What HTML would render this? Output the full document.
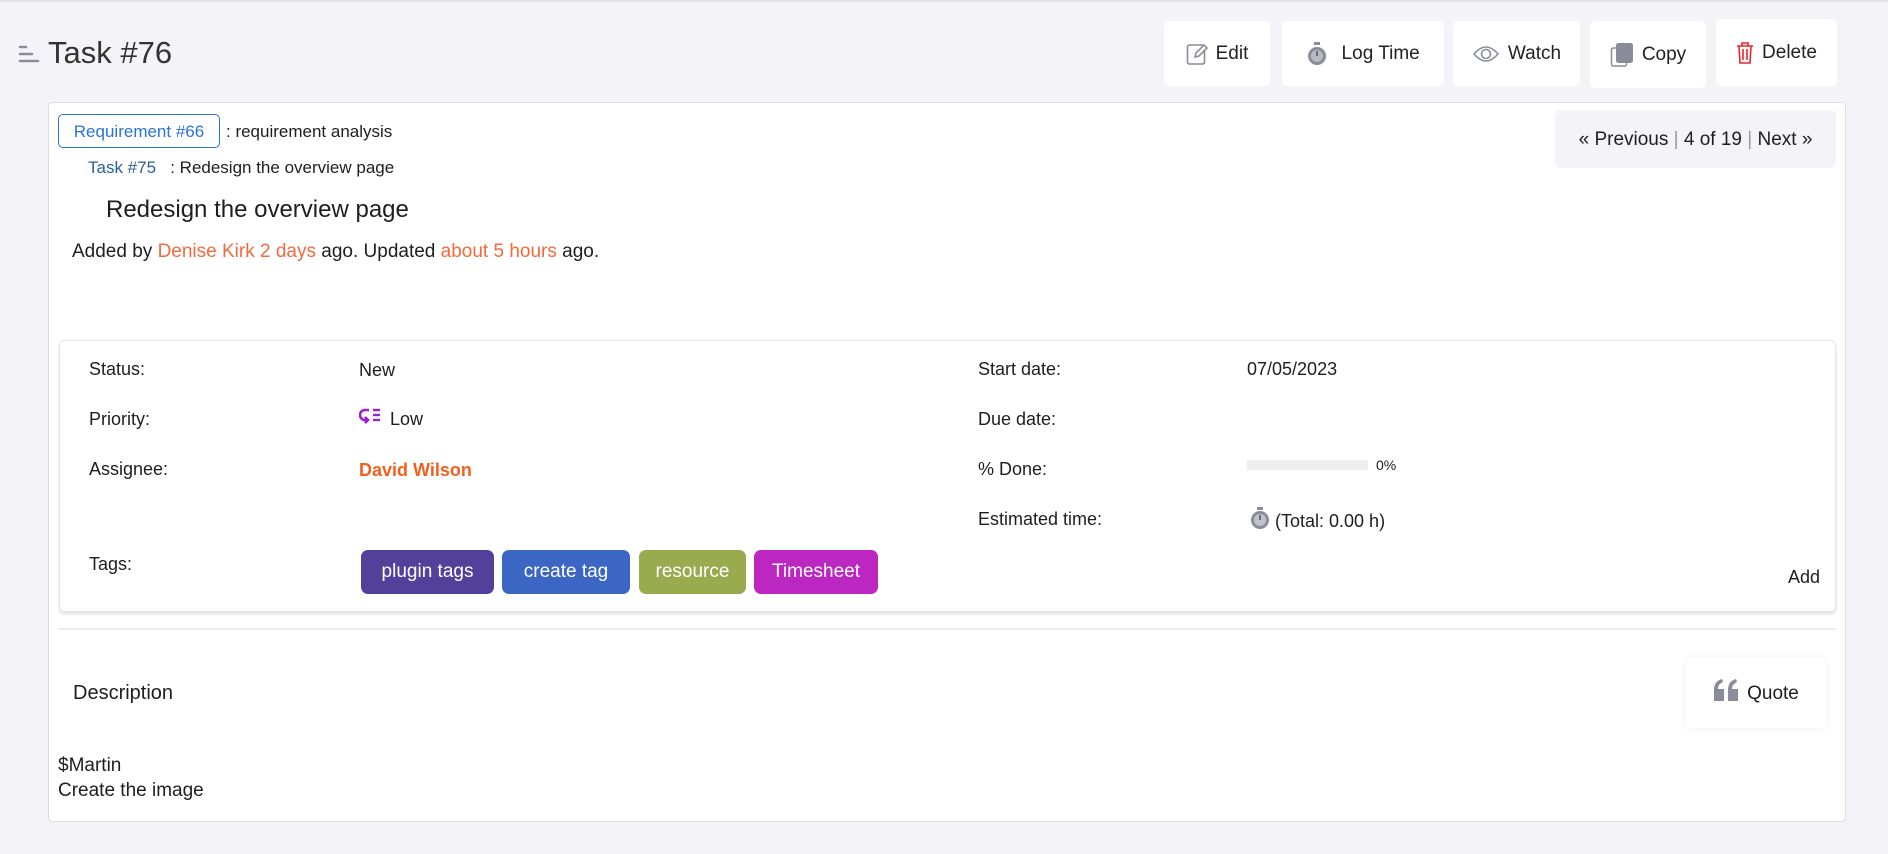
<!DOCTYPE html>
<html><head><meta charset="utf-8"><style>
*{margin:0;padding:0;box-sizing:border-box}
body{width:1888px;height:854px;background:#f4f4f8;font-family:"Liberation Sans",sans-serif;color:#1e1e1e;position:relative;overflow:hidden;border-top:2px solid #e2e2e8}
.a{position:absolute;white-space:nowrap;line-height:1}
.btn{position:absolute;background:#fff;border-radius:5px;display:flex;align-items:center;justify-content:center;font-size:19px;color:#222;gap:8px}
.lbl{font-size:18px}
.tag{position:absolute;top:548px;height:44px;border-radius:7px;color:#fff;font-size:19px;display:flex;align-items:center;justify-content:center}
.or{color:#f26a3d}
</style></head><body>
<svg class="a" style="left:18px;top:42px" width="22" height="20"><g stroke="#8a8c9a" stroke-width="2.5" stroke-linecap="round"><line x1="2" y1="3" x2="8" y2="3"/><line x1="2" y1="10" x2="14" y2="10"/><line x1="2" y1="17" x2="20" y2="17"/></g></svg>
<div class="a" style="left:48px;top:35px;font-size:31px;color:#333">Task #76</div>

<div class="btn" style="left:1164px;top:19px;width:106px;height:65px"><svg width="22" height="24" viewBox="0 0 22 24"><rect x="1.5" y="3" width="17" height="19" rx="2" fill="none" stroke="#8a8c9a" stroke-width="1.6"/><path d="M9 15l1-4 8-8 3 3-8 8z" fill="#fff" stroke="#8a8c9a" stroke-width="1.6"/></svg>Edit</div>
<div class="btn" style="left:1282px;top:19px;width:162px;height:65px"><svg width="22" height="26" viewBox="0 0 22 26"><rect x="8" y="1" width="6" height="3" fill="#8a8c9a"/><circle cx="11" cy="15" r="9" fill="#8a8c9a"/><circle cx="11" cy="15" r="6" fill="#b8bac4"/><line x1="11" y1="10" x2="11" y2="15" stroke="#555" stroke-width="1.5"/></svg>&nbsp;Log Time</div>
<div class="btn" style="left:1453px;top:19px;width:127px;height:65px"><svg width="28" height="20" viewBox="0 0 28 20"><path d="M2 10Q14 -4 26 10Q14 24 2 10z" fill="none" stroke="#8a8c9a" stroke-width="1.6"/><circle cx="14" cy="10" r="4.5" fill="none" stroke="#8a8c9a" stroke-width="1.6"/></svg>Watch</div>
<div class="btn" style="left:1590px;top:19px;width:116px;height:67px"><svg width="24" height="26" viewBox="0 0 24 26"><rect x="1.5" y="6" width="15" height="18" rx="2" fill="#fff" stroke="#8a8c9a" stroke-width="1.5"/><rect x="6" y="1" width="17" height="20" rx="2.5" fill="#8a8c9a"/></svg>Copy</div>
<div class="btn" style="left:1716px;top:17px;width:121px;height:67px"><svg width="18" height="24" viewBox="0 0 18 24"><g fill="none" stroke="#e8232c" stroke-width="1.6"><path d="M1 5h16M6 5V2h6v3M3 5l1 17h10l1-17M7 8v11M11 8v11"/></g></svg>Delete</div>

<div class="a" style="left:48px;top:100px;width:1798px;height:720px;background:#fff;border:1px solid #dcdce2;border-radius:4px"></div>

<div class="a" style="left:58px;top:112px;width:162px;height:34px;border:1px solid #2b73d6;border-radius:5px;color:#2b73d6;font-size:17px;display:flex;align-items:center;justify-content:center">Requirement #66</div>
<div class="a" style="left:226px;top:121px;font-size:17px">: requirement analysis</div>
<div class="a" style="left:88px;top:157px;font-size:17px"><span style="color:#2b5f9a">Task #75</span>&nbsp;&nbsp; : Redesign the overview page</div>
<div class="a" style="left:106px;top:196px;font-size:24px">Redesign the overview page</div>
<div class="a" style="left:72px;top:240px;font-size:19px">Added by <span class="or">Denise Kirk</span> <span class="or">2 days</span> ago. Updated <span class="or">about 5 hours</span> ago.</div>

<div class="a" style="left:1555px;top:108px;width:281px;height:58px;background:#f4f4f8;border-radius:6px;font-size:19px;display:flex;align-items:center;justify-content:center">« Previous <span style="color:#999">&nbsp;|&nbsp;</span> 4 of 19 <span style="color:#999">&nbsp;|&nbsp;</span> Next »</div>

<div class="a" style="left:59px;top:338px;width:1777px;height:272px;background:#fff;border:1px solid #e4e4ea;border-radius:5px;box-shadow:0 2px 3px rgba(0,0,0,.12)"></div>
<div class="a lbl" style="left:89px;top:358px">Status:</div>
<div class="a lbl" style="left:359px;top:359px">New</div>
<div class="a lbl" style="left:89px;top:408px">Priority:</div>
<svg class="a" style="left:359px;top:405px" width="22" height="20" viewBox="0 0 22 20"><g fill="none" stroke="#a020d0" stroke-width="2.6"><path d="M10 3H6a5 5 0 0 0 0 10h3"/><path d="M6 10l3 3-3 3"/></g><g stroke="#a020d0" stroke-width="2.4"><line x1="14" y1="3" x2="21" y2="3"/><line x1="14" y1="8" x2="21" y2="8"/><line x1="14" y1="13" x2="21" y2="13"/></g></svg>
<div class="a lbl" style="left:390px;top:408px">Low</div>
<div class="a lbl" style="left:89px;top:458px">Assignee:</div>
<div class="a lbl" style="left:359px;top:459px;color:#f2601e;font-weight:bold">David Wilson</div>
<div class="a lbl" style="left:89px;top:553px">Tags:</div>
<div class="tag" style="left:361px;width:133px;background:#52409a">plugin tags</div>
<div class="tag" style="left:502px;width:128px;background:#3b66c4">create tag</div>
<div class="tag" style="left:639px;width:107px;background:#9aaa4e">resource</div>
<div class="tag" style="left:754px;width:124px;background:#bb27c0">Timesheet</div>

<div class="a lbl" style="left:978px;top:358px">Start date:</div>
<div class="a lbl" style="left:1247px;top:358px">07/05/2023</div>
<div class="a lbl" style="left:978px;top:408px">Due date:</div>
<div class="a lbl" style="left:978px;top:458px">% Done:</div>
<div class="a" style="left:1247px;top:458px;width:121px;height:10px;background:#eee"></div>
<div class="a" style="left:1376px;top:456px;font-size:14px">0%</div>
<div class="a lbl" style="left:978px;top:508px">Estimated time:</div>
<svg class="a" style="left:1250px;top:505px" width="20" height="24" viewBox="0 0 20 24"><rect x="7" y="0" width="6" height="3" fill="#8a8c9a"/><circle cx="10" cy="13" r="9" fill="#8a8c9a"/><circle cx="10" cy="13" r="6" fill="#c2c4cc"/><line x1="10" y1="8" x2="10" y2="13" stroke="#555" stroke-width="1.5"/></svg>
<div class="a lbl" style="left:1275px;top:510px">(Total: 0.00 h)</div>
<div class="a lbl" style="left:1788px;top:566px">Add</div>

<div class="a" style="left:58px;top:626px;width:1778px;height:2px;background:#ececf0"></div>
<div class="a" style="left:73px;top:681px;font-size:20px">Description</div>
<div class="a" style="left:1686px;top:656px;width:140px;height:70px;background:#fff;border-radius:5px;box-shadow:0 0 8px rgba(0,0,0,.07);display:flex;align-items:center;justify-content:center;gap:8px;font-size:19px"><svg width="26" height="24" viewBox="0 0 26 24" style="margin-top:-6px"><path d="M1 23V12Q1 3 9 1l1 3Q5 6 5 11h6v12z M15 23V12Q15 3 23 1l1 3Q19 6 19 11h6v12z" fill="#8a8c9a"/></svg>Quote</div>
<div class="a" style="left:58px;top:754px;font-size:19px">$Martin</div>
<div class="a" style="left:58px;top:779px;font-size:19px">Create the image</div>
</body></html>
